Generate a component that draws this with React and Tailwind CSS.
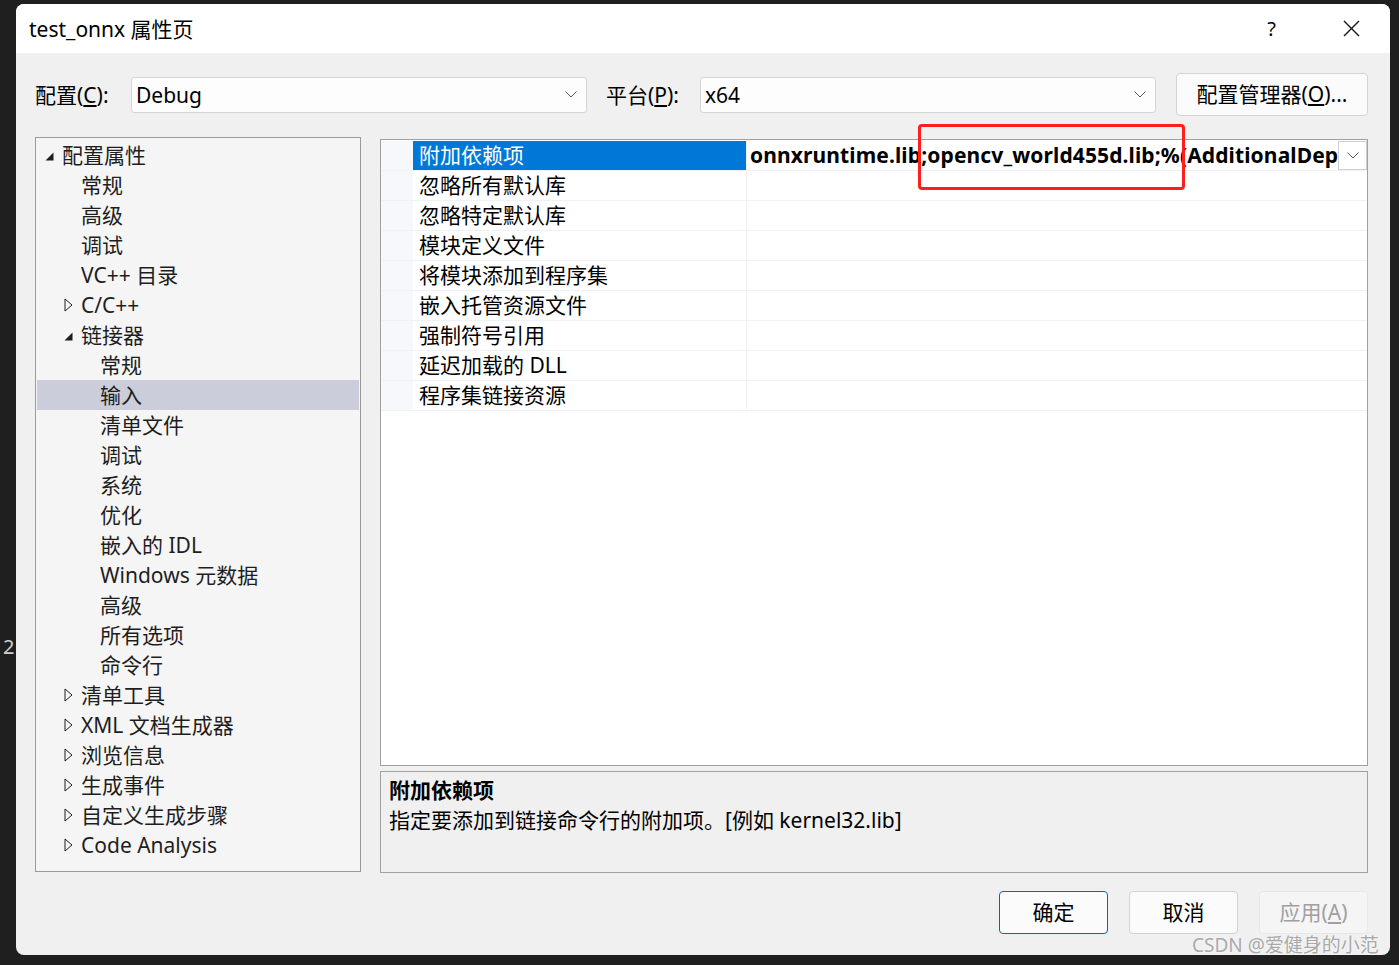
import React from 'react'

const tree = [
  { t: '配置属性', l: 0, s: 'open' },
  { t: '常规', l: 1 },
  { t: '高级', l: 1 },
  { t: '调试', l: 1 },
  { t: 'VC++ 目录', l: 1 },
  { t: 'C/C++', l: 1, s: 'closed' },
  { t: '链接器', l: 1, s: 'open' },
  { t: '常规', l: 2 },
  { t: '输入', l: 2, sel: true },
  { t: '清单文件', l: 2 },
  { t: '调试', l: 2 },
  { t: '系统', l: 2 },
  { t: '优化', l: 2 },
  { t: '嵌入的 IDL', l: 2 },
  { t: 'Windows 元数据', l: 2 },
  { t: '高级', l: 2 },
  { t: '所有选项', l: 2 },
  { t: '命令行', l: 2 },
  { t: '清单工具', l: 1, s: 'closed' },
  { t: 'XML 文档生成器', l: 1, s: 'closed' },
  { t: '浏览信息', l: 1, s: 'closed' },
  { t: '生成事件', l: 1, s: 'closed' },
  { t: '自定义生成步骤', l: 1, s: 'closed' },
  { t: 'Code Analysis', l: 1, s: 'closed' },
]

const indent = ['pl-[8px]', 'pl-[27px]', 'pl-[46px]']

const props = [
  '附加依赖项',
  '忽略所有默认库',
  '忽略特定默认库',
  '模块定义文件',
  '将模块添加到程序集',
  '嵌入托管资源文件',
  '强制符号引用',
  '延迟加载的 DLL',
  '程序集链接资源',
]

function Chevron() {
  return (
    <svg width="12" height="7" viewBox="0 0 12 7" fill="none">
      <polyline points="0.5,0.5 6,6 11.5,0.5" stroke="#5a5a5a" strokeWidth="1" />
    </svg>
  )
}

function Arrow({ s }) {
  if (s === 'open') {
    return (
      <svg width="9" height="9" viewBox="0 0 9 9" className="mt-[3px]">
        <polygon points="8.5,0.5 8.5,8.5 0.5,8.5" fill="#1e1e1e" />
      </svg>
    )
  }
  if (s === 'closed') {
    return (
      <svg width="9" height="14" viewBox="0 0 9 14" fill="none">
        <polygon points="1,1 8,7 1,13" stroke="#1e1e1e" strokeWidth="1" />
      </svg>
    )
  }
  return null
}

function Select({ value }) {
  return (
    <div className="flex items-center justify-between shrink-0 w-[456px] h-[36px] bg-[#fdfdfd] border border-[#d4d4d4] rounded-[3px] pl-[4px] pr-[9px]">
      <span className="pt-[3px]">{value}</span>
      <Chevron />
    </div>
  )
}

export default function App() {
  return (
    <div className="relative w-[1399px] h-[965px] bg-[#1f1f1f] overflow-hidden pt-[4px] pl-[16px] text-[21px] text-black font-['Noto_Sans','Noto_Sans_CJK_SC',sans-serif]">
      <span className="absolute left-[3px] top-[632px] text-[#cfcfcf] text-[20px]">2</span>

      <div className="w-[1374px] h-[951px] rounded-[8px] overflow-hidden bg-[#f0f0f0] flex flex-col">
        {/* title bar */}
        <div className="h-[49px] bg-white flex items-center pl-[13px] pr-[30px] shrink-0">
          <span className="flex-1 leading-[28px]">test_onnx 属性页</span>
          <span className="text-[20px] mr-[67px]">?</span>
          <svg width="17" height="17" viewBox="0 0 17 17">
            <line x1="1" y1="1" x2="16" y2="16" stroke="#1a1a1a" strokeWidth="1.4" />
            <line x1="16" y1="1" x2="1" y2="16" stroke="#1a1a1a" strokeWidth="1.4" />
          </svg>
        </div>

        <div className="flex-1 flex flex-col pl-[19px] pr-[22px]">
          {/* config row */}
          <div className="flex items-center h-[43px] mt-[20px]">
            <span className="w-[96px] shrink-0 pt-[3px]">
              配置(<span className="underline underline-offset-2">C</span>):
            </span>
            <Select value="Debug" />
            <span className="ml-[19px] w-[94px] shrink-0 pt-[3px]">
              平台(<span className="underline underline-offset-2">P</span>):
            </span>
            <Select value="x64" />
            <button className="ml-[20px] shrink-0 w-[192px] h-[43px] bg-[#fbfbfb] border border-[#d3d3d3] rounded-[4px]">
              配置管理器(<span className="underline underline-offset-2">O</span>)...
            </button>
          </div>

          <div className="flex mt-[21px] gap-[19px]">
            {/* tree */}
            <div className="w-[326px] shrink-0 h-[735px] border border-[#9a9a9a] bg-[#f5f5f5] pt-[2px] px-[1px] text-[#1e1e1e]">
              {tree.map((n, i) => (
                <div
                  key={i}
                  className={`flex items-center h-[30px] leading-[30px] whitespace-nowrap ${indent[n.l]} ${n.sel ? 'bg-[#cbcdda]' : ''}`}
                >
                  <div className="w-[17px] shrink-0 flex items-center">
                    <Arrow s={n.s} />
                  </div>
                  <span>{n.t}</span>
                </div>
              ))}
            </div>

            {/* right column */}
            <div className="flex-1 min-w-0 flex flex-col mt-[2px] gap-[5px]">
              <div className="h-[627px] border border-[#a0a0a0] bg-white pt-[1px]">
                {props.map((p, i) => (
                  <div key={i} className="flex h-[30px] border-b border-[#eef2f8]">
                    <div className="w-[32px] shrink-0 bg-[#f6f8fc]" />
                    <div
                      className={`w-[334px] shrink-0 pl-[6px] leading-[29px] border-r border-[#eef2f8] ${
                        i === 0 ? 'bg-[#0078d7] text-white' : ''
                      }`}
                    >
                      {p}
                    </div>
                    <div className="flex-1 flex min-w-0">
                      {i === 0 && (
                        <>
                          <div className="flex-1 min-w-0 overflow-hidden whitespace-nowrap font-bold pl-[3px] leading-[29px] tracking-[0.12px]">
                            onnxruntime.lib;opencv_world455d.lib;%(AdditionalDep
                          </div>
                          <div className="w-[29px] h-[29px] shrink-0 bg-white border border-[#cfcfcf] flex items-center justify-center">
                            <Chevron />
                          </div>
                        </>
                      )}
                    </div>
                  </div>
                ))}
              </div>

              <div className="h-[102px] border border-[#a0a0a0] bg-[#f0f0f0] pl-[8px] pt-[3px] leading-[30px]">
                <div className="font-bold">附加依赖项</div>
                <div>指定要添加到链接命令行的附加项。[例如 kernel32.lib]</div>
              </div>
            </div>
          </div>

          {/* buttons */}
          <div className="flex justify-end gap-[21px] mt-[18px]">
            <button className="w-[109px] h-[43px] bg-[#fbfbfb] border border-[#0067c0] rounded-[4px]">确定</button>
            <button className="w-[109px] h-[43px] bg-[#fbfbfb] border border-[#d3d3d3] rounded-[4px]">取消</button>
            <button className="w-[109px] h-[43px] bg-[#f5f5f5] border border-[#e8e8e8] rounded-[4px] text-[#a0a0a0]">
              应用(<span className="underline underline-offset-2">A</span>)
            </button>
          </div>
        </div>
      </div>

      {/* annotation */}
      <div className="absolute left-[918px] top-[124px] w-[267px] h-[66px] border-[3px] border-[#ff1e1e] rounded-[4px]" />

      {/* watermark */}
      <span className="absolute left-[1192px] top-[931px] text-[19px] text-[#a9a9a9] [text-shadow:0_0_2px_#ffffff]">
        CSDN @爱健身的小范
      </span>
    </div>
  )
}
